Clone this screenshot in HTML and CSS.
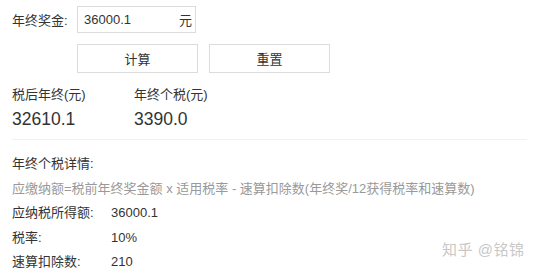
FILE: index.html
```html
<!DOCTYPE html>
<html lang="zh">
<head>
<meta charset="utf-8">
<link rel="stylesheet" href="styles.css">
</head>
<body>
<div class="page">
  <div class="bonus-row">
    <span class="bonus-label">年终奖金:</span>
    <div class="bonus-input"><span>36000.1</span><span class="unit">元</span></div>
  </div>
  <div class="actions">
    <button class="btn">计算</button>
    <button class="btn">重置</button>
  </div>
  <div class="results">
    <div class="result">
      <div class="result-label">税后年终(元)</div>
      <div class="result-value">32610.1</div>
    </div>
    <div class="result">
      <div class="result-label">年终个税(元)</div>
      <div class="result-value">3390.0</div>
    </div>
  </div>
  <div class="details">
    <div class="details-title">年终个税详情:</div>
    <div class="formula">应缴纳额=税前年终奖金额 x 适用税率 - 速算扣除数(年终奖/12获得税率和速算数)</div>
    <div class="detail-row"><span class="detail-key">应纳税所得额:</span><span>36000.1</span></div>
    <div class="detail-row"><span class="detail-key">税率:</span><span>10%</span></div>
    <div class="detail-row"><span class="detail-key">速算扣除数:</span><span>210</span></div>
  </div>
</div>
<div class="watermark">知乎 @铭锦</div>
</body>
</html>
```
FILE: styles.css
```css
html, body {
  margin: 0;
  padding: 0;
  background: #fff;
}
body {
  font-family: "Liberation Sans", "Noto Sans CJK SC", sans-serif;
  color: #333;
  font-size: 13px;
  position: relative;
  width: 541px;
  height: 274px;
  overflow: hidden;
}
.page {
  padding: 6px 14px 0 12px;
}
.bonus-row {
  display: flex;
  align-items: center;
  height: 27px;
}
.bonus-label {
  width: 65px;
}
.bonus-input {
  box-sizing: border-box;
  width: 119px;
  height: 27px;
  border: 1px solid #dcdcdc;
  display: flex;
  align-items: center;
  justify-content: space-between;
  padding: 0 3px 0 6px;
}
.actions {
  display: flex;
  gap: 11px;
  margin: 11px 0 0 65px;
}
.btn {
  box-sizing: border-box;
  width: 121px;
  height: 29px;
  border: 1px solid #dcdcdc;
  background: #fff;
  color: #333;
  font-family: inherit;
  font-size: 13px;
  padding: 0;
}
.results {
  display: flex;
  margin-top: 13px;
}
.result {
  width: 122px;
}
.result-label {
  line-height: 18px;
  height: 18px;
}
.result-value {
  margin-top: 4px;
  font-size: 17.5px;
  line-height: 22px;
}
.details {
  margin-top: 9px;
  border-top: 1px solid #f0f0f0;
  padding-top: 12px;
}
.details > div {
  line-height: 24.5px;
  height: 24.5px;
}
.formula {
  color: #999;
}
.detail-row {
  display: flex;
}
.detail-key {
  width: 99px;
}
.watermark {
  position: absolute;
  left: 442px;
  top: 238px;
  font-size: 15px;
  color: #c8c8c8;
  letter-spacing: 0.5px;
}
```
